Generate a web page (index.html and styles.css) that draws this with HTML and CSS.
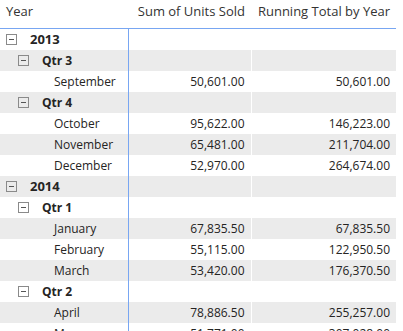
FILE: index.html
```html
<!DOCTYPE html>
<html lang="en">
<head>
  <meta charset="UTF-8">
  <title>Running Total Matrix</title>
  <link rel="stylesheet" href="styles.css">
</head>
<body>
  <div class="matrix">
    <table>
      <thead>
        <tr>
          <th class="year-head">Year</th>
          <th class="num sum-head">Sum of Units Sold</th>
          <th class="num">Running Total by Year</th>
        </tr>
      </thead>
      <tbody>
        <tr>
          <td class="lvl1"><span class="toggle"></span>2013</td>
          <td></td><td></td>
        </tr>
        <tr>
          <td class="lvl2"><span class="toggle"></span>Qtr 3</td>
          <td></td><td></td>
        </tr>
        <tr>
          <td class="lvl3">September</td>
          <td class="num">50,601.00</td><td class="num">50,601.00</td>
        </tr>
        <tr>
          <td class="lvl2"><span class="toggle"></span>Qtr 4</td>
          <td></td><td></td>
        </tr>
        <tr>
          <td class="lvl3">October</td>
          <td class="num">95,622.00</td><td class="num">146,223.00</td>
        </tr>
        <tr>
          <td class="lvl3">November</td>
          <td class="num">65,481.00</td><td class="num">211,704.00</td>
        </tr>
        <tr>
          <td class="lvl3">December</td>
          <td class="num">52,970.00</td><td class="num">264,674.00</td>
        </tr>
        <tr>
          <td class="lvl1"><span class="toggle"></span>2014</td>
          <td></td><td></td>
        </tr>
        <tr>
          <td class="lvl2"><span class="toggle"></span>Qtr 1</td>
          <td></td><td></td>
        </tr>
        <tr>
          <td class="lvl3">January</td>
          <td class="num">67,835.50</td><td class="num">67,835.50</td>
        </tr>
        <tr>
          <td class="lvl3">February</td>
          <td class="num">55,115.00</td><td class="num">122,950.50</td>
        </tr>
        <tr>
          <td class="lvl3">March</td>
          <td class="num">53,420.00</td><td class="num">176,370.50</td>
        </tr>
        <tr>
          <td class="lvl2"><span class="toggle"></span>Qtr 2</td>
          <td></td><td></td>
        </tr>
        <tr>
          <td class="lvl3">April</td>
          <td class="num">78,886.50</td><td class="num">255,257.00</td>
        </tr>
        <tr>
          <td class="lvl3">May</td>
          <td class="num">51,771.00</td><td class="num">307,028.00</td>
        </tr>
      </tbody>
    </table>
  </div>
</body>
</html>
```

FILE: styles.css
```css
body {
  margin: 0;
  background: #fff;
  font-family: 'Open Sans', sans-serif;
  font-size: 12px;
  color: #252423;
  overflow: hidden;
}
.matrix {
  width: 396px;
}
table {
  width: 100%;
  border-collapse: collapse;
  table-layout: fixed;
}
th {
  box-sizing: border-box;
  height: 28px;
  padding: 0 6px 6px 6px;
  font-weight: normal;
  color: #333;
  font-size: 13px;
  white-space: nowrap;
  border-bottom: 1px solid #78a6f2;
  text-align: left;
}
th.year-head {
  width: 128px;
}
th.sum-head {
  width: 123px;
}
td {
  height: 21px;
  padding: 0 6px;
  white-space: nowrap;
  line-height: 21px;
}
td:first-child {
  border-right: 1px solid #78a6f2;
}
td:nth-child(2) {
  border-right: 1px solid #fff;
}
.num {
  text-align: right;
}
tbody tr:nth-child(even) td {
  background: #ebebeb;
}
.lvl1 {
  font-weight: bold;
  font-size: 13px;
}
.lvl2 {
  font-weight: bold;
  padding-left: 18px;
}
.lvl3 {
  padding-left: 54px;
}
.toggle {
  display: inline-block;
  position: relative;
  width: 9px;
  height: 9px;
  border: 1px solid #8a8a8a;
  margin-right: 13px;
  vertical-align: -1px;
}
.toggle::after {
  content: '';
  position: absolute;
  left: 2px;
  right: 2px;
  top: 4px;
  height: 1px;
  background: #555;
}
```
